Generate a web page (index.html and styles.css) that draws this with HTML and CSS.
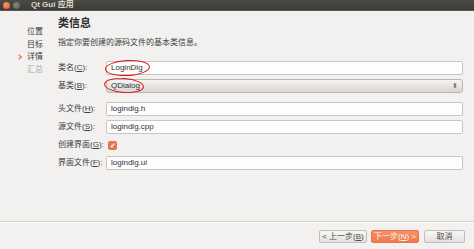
FILE: index.html
```html
<!DOCTYPE html>
<html lang="zh">

<head>
    <meta charset="UTF-8">
    <title>Qt Gui 应用</title>
    <link rel="stylesheet" href="styles.css">
</head>

<body>
    <div class="vindue">

        <div class="titelbar">
            <span class="knap luk"></span>
            <span class="knap min"></span>
            <span class="titel">Qt Gui 应用</span>
        </div>

        <div class="hoved">
            <ul class="trin">
                <li>位置</li>
                <li>目标</li>
                <li class="aktiv">详情</li>
                <li class="senere">汇总</li>
            </ul>

            <div class="indhold">
                <h1>类信息</h1>
                <p class="under">指定你要创建的源码文件的基本类信息。</p>

                <div class="form">
                    <label>类名(<u>C</u>):</label>
                    <div class="felt markeret">LoginDlg<span class="ring ring1"></span></div>

                    <label>基类(<u>B</u>):</label>
                    <div class="combo markeret">QDialog<span class="pile">⬍</span><span class="ring ring2"></span></div>

                    <label class="luft">头文件(<u>H</u>):</label>
                    <div class="felt luft">logindlg.h</div>

                    <label>源文件(<u>S</u>):</label>
                    <div class="felt">logindlg.cpp</div>

                    <label>创建界面(<u>G</u>):</label>
                    <div class="tjek"><span class="boks">✔</span></div>

                    <label>界面文件(<u>F</u>):</label>
                    <div class="felt">logindlg.ui</div>
                </div>
            </div>
        </div>

        <div class="bund">
            <button class="btn">&lt; 上一步(<u>B</u>)</button>
            <button class="btn naeste">下一步(<u>N</u>) &gt;</button>
            <button class="btn annuller">取消</button>
        </div>

    </div>
</body>

</html>
```

FILE: styles.css
```css
* {
    box-sizing: border-box;
}

body {
    margin: 0;
    background-color: #f2f1f0;
    font-family: "Liberation Sans", "Noto Sans CJK SC", sans-serif;
    font-size: 8px;
    color: #3c3c3c;
}

.vindue {
    height: 249px;
    display: flex;
    flex-direction: column;
}

.titelbar {
    height: 11px;
    display: flex;
    align-items: center;
    background: linear-gradient(#4d4b45, #3c3b37);
    border-bottom: 1px solid #5a5852;
    padding-left: 3px;
}

.knap {
    width: 7px;
    height: 7px;
    border-radius: 50%;
    margin-right: 3px;
}

.luk {
    background: radial-gradient(circle at 40% 35%, #f59a6f, #e0532a);
}

.min {
    background: radial-gradient(circle at 40% 35%, #8a8882, #5c5a55);
}

.titel {
    margin-left: 8px;
    color: #dcd8cf;
    font-weight: bold;
    font-size: 8px;
    line-height: 10px;
}

.hoved {
    flex: 1;
    display: flex;
}

.trin {
    list-style: none;
    margin: 0;
    padding: 15px 0 0 27px;
    width: 58px;
}

.trin li {
    line-height: 12.5px;
    position: relative;
}

.trin .aktiv::before {
    content: "";
    position: absolute;
    left: -10px;
    top: 4px;
    width: 3px;
    height: 3px;
    border-right: 1.5px solid #e5642c;
    border-bottom: 1.5px solid #e5642c;
    transform: rotate(-45deg);
}

.trin .senere {
    color: #a8a6a2;
}

.indhold {
    flex: 1;
    padding: 5px 11px 0 0;
}

h1 {
    margin: 0;
    font-size: 11px;
    line-height: 14px;
    color: #2f2f2f;
}

.under {
    margin: 7px 0 0;
    line-height: 12px;
}

.form {
    margin-top: 12px;
    display: grid;
    grid-template-columns: 48px 1fr;
    row-gap: 4px;
    align-items: center;
}

.form label {
    line-height: 14px;
}

.luft {
    margin-top: 5px;
}

.felt,
.combo {
    height: 14px;
    line-height: 12px;
    padding-left: 4px;
    border: 1px solid #c9c6c1;
    border-radius: 2px;
    background-color: #fdfdfd;
    color: #333;
    position: relative;
}

.combo {
    background: linear-gradient(#f6f5f4, #d9d7d4);
    border-color: #b9b6b1;
    border-radius: 3px;
}

.pile {
    position: absolute;
    right: 4px;
    top: 0;
    font-size: 7px;
    color: #777;
}

.tjek {
    height: 12px;
    display: flex;
    align-items: center;
    padding-left: 2px;
}

.boks {
    width: 9px;
    height: 9px;
    border-radius: 2px;
    background-color: #e2784f;
    color: #fff;
    font-size: 7px;
    line-height: 9px;
    text-align: center;
}

.ring {
    position: absolute;
    border: 1.5px solid #e01010;
    border-radius: 50%;
}

.ring1 {
    left: -2px;
    top: -2px;
    width: 45px;
    height: 16px;
    transform: rotate(-3deg);
}

.ring2 {
    left: -3px;
    top: -2px;
    width: 40px;
    height: 15px;
    transform: rotate(4deg);
}

.bund {
    height: 28px;
    border-top: 1px solid #d3d1cd;
    box-shadow: inset 0 1px 0 #fbfbfa;
    display: flex;
    justify-content: flex-end;
    align-items: flex-start;
    padding: 8px 9px 0 0;
    gap: 4px;
}

.btn {
    width: 48px;
    height: 13px;
    padding: 0;
    font-family: inherit;
    font-size: 8px;
    line-height: 11px;
    color: #4a4a4a;
    border: 1px solid #c1beb9;
    border-radius: 2px;
    background: linear-gradient(#f7f7f6, #e3e1de);
}

.naeste {
    margin-right: 1px;
    color: #fff3ec;
    border-color: #e9744a;
    background: linear-gradient(#f5916a, #ee7a50);
}

.annuller {
    width: 41px;
}
```
